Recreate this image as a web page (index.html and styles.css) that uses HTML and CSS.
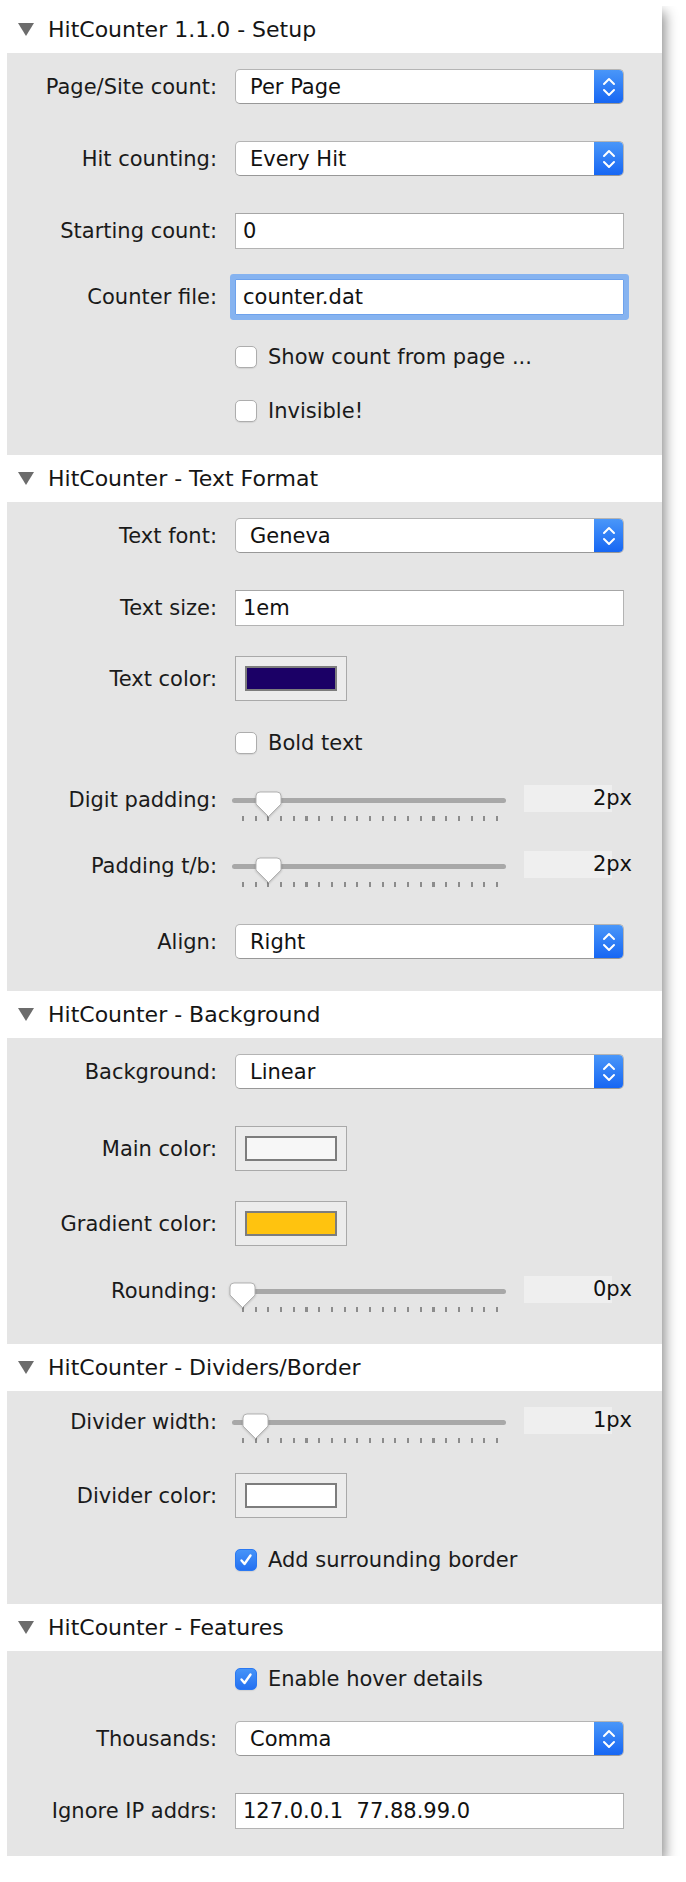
FILE: index.html
```html
<!DOCTYPE html>
<html lang="en">
<head>
  <meta charset="UTF-8" />
  <title>HitCounter Settings</title>
  <link rel="stylesheet" href="styles.css">
</head>
<body>

<div class="panel">

  <!-- Setup -->
  <section class="group">
    <h2 class="group-title"><span class="disclosure"></span>HitCounter 1.1.0 - Setup</h2>
    <div class="group-body">
      <div class="row">
        <label>Page/Site count:</label>
        <div class="select">
          <select><option>Per Page</option><option>Per Site</option></select>
          <span class="stepper"><svg width="30" height="35" viewBox="0 0 30 35"><path d="M10 15 L15 10 L20 15 M10 21 L15 26 L20 21" /></svg></span>
        </div>
      </div>
      <div class="row spaced">
        <label>Hit counting:</label>
        <div class="select">
          <select><option>Every Hit</option><option>Unique</option></select>
          <span class="stepper"><svg width="30" height="35" viewBox="0 0 30 35"><path d="M10 15 L15 10 L20 15 M10 21 L15 26 L20 21" /></svg></span>
        </div>
      </div>
      <div class="row spaced">
        <label for="startCount">Starting count:</label>
        <input type="text" id="startCount" class="field" value="0">
      </div>
      <div class="row">
        <label for="counterFile">Counter file:</label>
        <input type="text" id="counterFile" class="field focused" value="counter.dat">
      </div>
      <div class="row">
        <span></span>
        <label class="check"><input type="checkbox"><span class="box"></span>Show count from page ...</label>
      </div>
      <div class="row">
        <span></span>
        <label class="check"><input type="checkbox"><span class="box"></span>Invisible!</label>
      </div>
    </div>
  </section>

  <!-- Text format -->
  <section class="group">
    <h2 class="group-title"><span class="disclosure"></span>HitCounter - Text Format</h2>
    <div class="group-body">
      <div class="row">
        <label>Text font:</label>
        <div class="select">
          <select><option>Geneva</option><option>Helvetica</option></select>
          <span class="stepper"><svg width="30" height="35" viewBox="0 0 30 35"><path d="M10 15 L15 10 L20 15 M10 21 L15 26 L20 21" /></svg></span>
        </div>
      </div>
      <div class="row spaced">
        <label for="textSize">Text size:</label>
        <input type="text" id="textSize" class="field" value="1em">
      </div>
      <div class="row">
        <label>Text color:</label>
        <button class="well"><span class="swatch" style="background: #1b0066"></span></button>
      </div>
      <div class="row">
        <span></span>
        <label class="check"><input type="checkbox"><span class="box"></span>Bold text</label>
      </div>
      <div class="row slider-row">
        <label>Digit padding:</label>
        <div class="slider-wrap">
          <div class="slider">
            <div class="track"></div>
            <div class="ticks"></div>
            <svg class="thumb" style="left: 22.6px" width="27" height="27" viewBox="0 0 27 27"><path d="M5 1 H22 Q26 1 26 5 V13 L13.5 25.5 L1 13 V5 Q1 1 5 1 Z" /></svg>
          </div>
          <span class="value">2px</span>
        </div>
      </div>
      <div class="row slider-row">
        <label>Padding t/b:</label>
        <div class="slider-wrap">
          <div class="slider">
            <div class="track"></div>
            <div class="ticks"></div>
            <svg class="thumb" style="left: 22.6px" width="27" height="27" viewBox="0 0 27 27"><path d="M5 1 H22 Q26 1 26 5 V13 L13.5 25.5 L1 13 V5 Q1 1 5 1 Z" /></svg>
          </div>
          <span class="value">2px</span>
        </div>
      </div>
      <div class="row spaced">
        <label>Align:</label>
        <div class="select">
          <select><option>Right</option><option>Left</option><option>Center</option></select>
          <span class="stepper"><svg width="30" height="35" viewBox="0 0 30 35"><path d="M10 15 L15 10 L20 15 M10 21 L15 26 L20 21" /></svg></span>
        </div>
      </div>
    </div>
  </section>

  <!-- Background -->
  <section class="group">
    <h2 class="group-title"><span class="disclosure"></span>HitCounter - Background</h2>
    <div class="group-body">
      <div class="row">
        <label>Background:</label>
        <div class="select">
          <select><option>Linear</option><option>Solid</option></select>
          <span class="stepper"><svg width="30" height="35" viewBox="0 0 30 35"><path d="M10 15 L15 10 L20 15 M10 21 L15 26 L20 21" /></svg></span>
        </div>
      </div>
      <div class="row spaced">
        <label>Main color:</label>
        <button class="well"><span class="swatch" style="background: #f7f7f7"></span></button>
      </div>
      <div class="row">
        <label>Gradient color:</label>
        <button class="well"><span class="swatch" style="background: #ffc30f"></span></button>
      </div>
      <div class="row slider-row">
        <label>Rounding:</label>
        <div class="slider-wrap">
          <div class="slider">
            <div class="track"></div>
            <div class="ticks"></div>
            <svg class="thumb" style="left: -2.8px" width="27" height="27" viewBox="0 0 27 27"><path d="M5 1 H22 Q26 1 26 5 V13 L13.5 25.5 L1 13 V5 Q1 1 5 1 Z" /></svg>
          </div>
          <span class="value">0px</span>
        </div>
      </div>
    </div>
  </section>

  <!-- Dividers -->
  <section class="group">
    <h2 class="group-title"><span class="disclosure"></span>HitCounter - Dividers/Border</h2>
    <div class="group-body">
      <div class="row slider-row">
        <label>Divider width:</label>
        <div class="slider-wrap">
          <div class="slider">
            <div class="track"></div>
            <div class="ticks"></div>
            <svg class="thumb" style="left: 9.9px" width="27" height="27" viewBox="0 0 27 27"><path d="M5 1 H22 Q26 1 26 5 V13 L13.5 25.5 L1 13 V5 Q1 1 5 1 Z" /></svg>
          </div>
          <span class="value">1px</span>
        </div>
      </div>
      <div class="row">
        <label>Divider color:</label>
        <button class="well"><span class="swatch" style="background: #ffffff"></span></button>
      </div>
      <div class="row">
        <span></span>
        <label class="check"><input type="checkbox" checked><span class="box"><svg width="22" height="22" viewBox="0 0 22 22"><path d="M6.5 11.5 L9.5 15 L15.5 6.5" /></svg></span>Add surrounding border</label>
      </div>
    </div>
  </section>

  <!-- Features -->
  <section class="group">
    <h2 class="group-title"><span class="disclosure"></span>HitCounter - Features</h2>
    <div class="group-body">
      <div class="row">
        <span></span>
        <label class="check"><input type="checkbox" checked><span class="box"><svg width="22" height="22" viewBox="0 0 22 22"><path d="M6.5 11.5 L9.5 15 L15.5 6.5" /></svg></span>Enable hover details</label>
      </div>
      <div class="row">
        <label>Thousands:</label>
        <div class="select">
          <select><option>Comma</option><option>Period</option><option>None</option></select>
          <span class="stepper"><svg width="30" height="35" viewBox="0 0 30 35"><path d="M10 15 L15 10 L20 15 M10 21 L15 26 L20 21" /></svg></span>
        </div>
      </div>
      <div class="row spaced">
        <label for="ignoreIp">Ignore IP addrs:</label>
        <input type="text" id="ignoreIp" class="field" value="127.0.0.1  77.88.99.0">
      </div>
    </div>
  </section>

</div>

</body>
</html>
```

FILE: styles.css
```css
body {
  margin: 6px 0 0 7px;
  font-family: "DejaVu Sans", sans-serif;
  font-size: 21px;
  color: #1a1a1a;
  background-color: #fff;
}
.panel {
  width: 655px;
  background-color: #e5e5e5;
  box-shadow: 3px 6px 12px rgba(0, 0, 0, 0.45);
}
.group-title {
  display: flex;
  align-items: center;
  height: 47px;
  margin: 0;
  padding-left: 11px;
  background-color: #fff;
  font-size: 22px;
  font-weight: normal;
  color: #151515;
}
.disclosure {
  width: 0;
  height: 0;
  margin-right: 14px;
  border-left: 8px solid transparent;
  border-right: 8px solid transparent;
  border-top: 13px solid #6c6c6c;
}
.group-body {
  display: flex;
  flex-direction: column;
  gap: 30px;
  padding: 16px 38px 32px 0;
}
.group:last-child .group-body {
  padding-bottom: 27px;
}
.row {
  display: grid;
  grid-template-columns: 210px 1fr;
  column-gap: 18px;
  align-items: center;
}
.row.spaced {
  margin-top: 7px;
}
.row > label {
  text-align: right;
  white-space: nowrap;
}

/* popup menu */
.select {
  display: flex;
  height: 35px;
  box-sizing: border-box;
  border: 1px solid #b4b4b4;
  border-bottom-color: #989898;
  border-radius: 5px;
  background-color: #fff;
  overflow: hidden;
}
.select select {
  flex: 1;
  appearance: none;
  -webkit-appearance: none;
  border: none;
  outline: none;
  background: transparent;
  padding: 0 0 0 14px;
  font-family: inherit;
  font-size: 21px;
  color: #111;
}
.stepper {
  width: 30px;
  margin: -1px -1px -1px 0;
  background: linear-gradient(#4b98f9, #1565f3);
}
.stepper svg {
  display: block;
}
.stepper path {
  fill: none;
  stroke: #fff;
  stroke-width: 2;
  stroke-linecap: round;
  stroke-linejoin: round;
}

/* text fields */
.field {
  height: 36px;
  box-sizing: border-box;
  width: 100%;
  margin: 0;
  padding: 0 7px;
  border: 1px solid #b3b3b3;
  border-top-color: #a6a6a6;
  border-radius: 0;
  background-color: #fff;
  font-family: inherit;
  font-size: 21px;
  color: #111;
  outline: none;
}
.field.focused {
  border-color: #6ea2ec;
  box-shadow: 0 0 0 5px #86b3f0;
  border-radius: 1px;
}

/* checkboxes */
.check {
  display: flex;
  align-items: center;
  height: 24px;
  cursor: pointer;
}
.check input {
  display: none;
}
.check .box {
  width: 22px;
  height: 22px;
  box-sizing: border-box;
  margin-right: 11px;
  border: 1px solid #adadad;
  border-radius: 5px;
  background-color: #fff;
  box-shadow: 0 1px 1px rgba(0, 0, 0, 0.08);
}
.check input:checked + .box {
  border-color: #2a78f2;
  background: linear-gradient(#4694f8, #2470f1);
}
.check .box svg {
  display: block;
  margin: -1px;
}
.check .box path {
  fill: none;
  stroke: #fff;
  stroke-width: 2.4;
  stroke-linecap: round;
  stroke-linejoin: round;
}

/* color wells */
.well {
  width: 112px;
  height: 45px;
  box-sizing: border-box;
  padding: 9px;
  border: 1px solid #a9a9a9;
  background-color: #ececec;
  cursor: pointer;
}
.swatch {
  display: block;
  height: 25px;
  box-sizing: border-box;
  border: 2px solid #7d7d7d;
}

/* sliders */
.row.slider-row {
  align-items: start;
}
.slider-row > label {
  line-height: 31px;
}
.slider-wrap {
  display: flex;
  margin-left: -3px;
}
.slider {
  position: relative;
  width: 274px;
  height: 36px;
}
.track {
  position: absolute;
  left: 0;
  right: 0;
  top: 13px;
  height: 5px;
  border-radius: 3px;
  background-color: #a8a8a8;
}
.ticks {
  position: absolute;
  left: 10px;
  top: 31px;
  width: 256px;
  height: 5px;
  background: repeating-linear-gradient(to right, #8c8c8c 0 2px, transparent 2px 12.7px);
}
.thumb {
  position: absolute;
  top: 6px;
  filter: drop-shadow(0 1px 1px rgba(0, 0, 0, 0.2));
}
.thumb path {
  fill: #fff;
  stroke: #b2b2b2;
  stroke-width: 1;
}
.value {
  width: 108px;
  height: 27px;
  margin-left: 18px;
  line-height: 27px;
  text-align: right;
  background: linear-gradient(to right, #efefef 88px, transparent 88px);
  color: #111;
}
```
